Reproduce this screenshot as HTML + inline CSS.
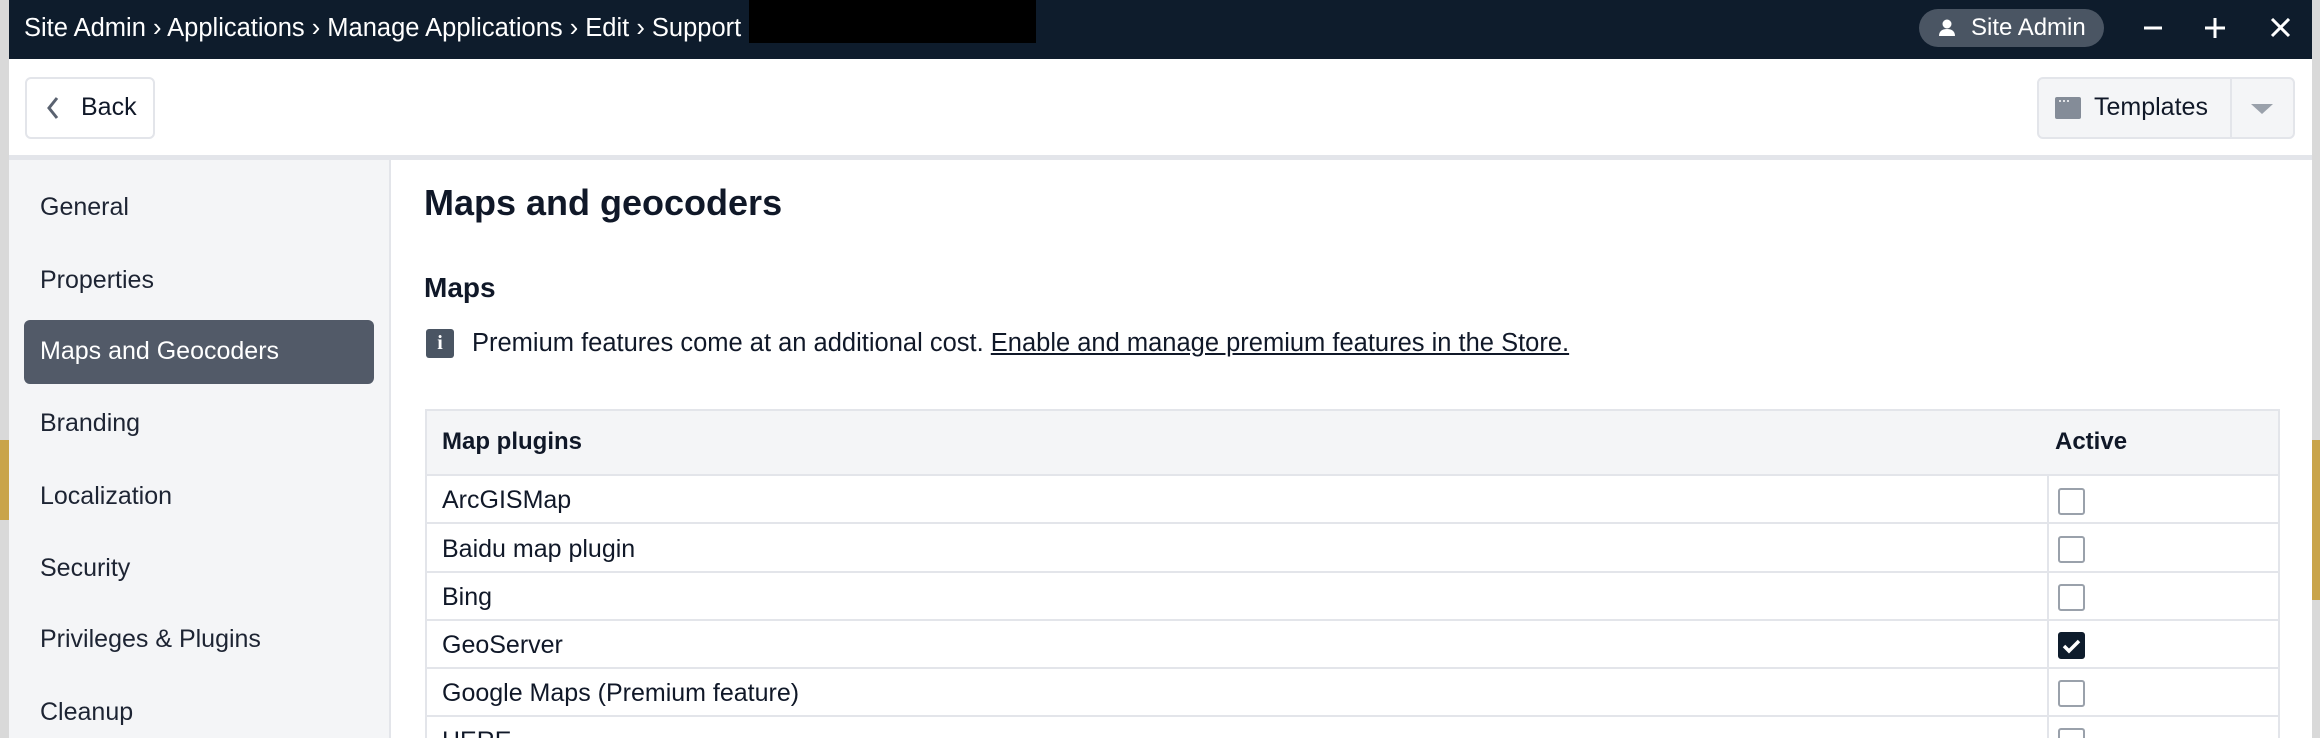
<!DOCTYPE html>
<html style="width:2320px;height:738px;overflow:hidden"><head><meta charset="utf-8"><style>
*{box-sizing:border-box;margin:0;padding:0}
body{width:2320px;height:738px;overflow:hidden;background:#d9d9d9;font-family:"Liberation Sans",sans-serif;color:#101828;position:relative}
.a{position:absolute}
.hdr{left:9px;top:0;width:2303px;height:59px;background:#0e1c2c}
.modal{left:9px;top:59px;width:2303px;height:679px;background:#fff}
.cb{position:absolute;left:2058px;width:27px;height:27px;border:2px solid #9aa1ab;border-radius:3px;background:#fff}
.row{position:absolute;left:425px;width:1855px;height:48px;border-bottom:2px solid #e3e5ea;font-size:25px;line-height:48px;padding-left:17px}
.side{position:absolute;left:40px;font-size:25px;color:#1d2433}
</style></head><body>
<div class="a" style="left:0;top:440px;width:9px;height:80px;background:#c9a44a"></div>
<div class="a" style="left:2312px;top:440px;width:8px;height:160px;background:#c9a44a"></div>
<div class="a hdr"></div>
<div class="a" style="left:24px;top:12px;font-size:25.5px;color:#fff;line-height:32px;white-space:nowrap">Site Admin › Applications › Manage Applications › Edit › Support</div>
<div class="a" style="left:749px;top:0;width:287px;height:43px;background:#000"></div>
<div class="a" style="left:1919px;top:9px;width:185px;height:38px;border-radius:19px;background:#4a5563"></div>
<svg class="a" style="left:1937px;top:18px" width="20" height="20" viewBox="0 0 20 20"><circle cx="10" cy="6" r="4.5" fill="#fff"/><path d="M2 18c0-5 3.5-7 8-7s8 2 8 7z" fill="#fff"/></svg>
<div class="a" style="left:1971px;top:12px;font-size:24px;color:#fff;line-height:32px">Site Admin</div>
<svg class="a" style="left:2142px;top:18px" width="160" height="22" viewBox="0 0 160 22"><path d="M2 10h18" stroke="#fff" stroke-width="3"/><path d="M63 10h20M73 0v20" stroke="#fff" stroke-width="3"/><path d="M130 1l17 17M147 1l-17 17" stroke="#fff" stroke-width="3"/></svg>
<div class="a modal"></div>
<div class="a" style="left:25px;top:77px;width:130px;height:62px;border:2px solid #e3e5ea;border-radius:6px;background:#fff"></div>
<svg class="a" style="left:46px;top:96px" width="14" height="24" viewBox="0 0 14 24"><path d="M11 2L3 12l8 10" stroke="#5a6270" stroke-width="3" fill="none"/></svg>
<div class="a" style="left:81px;top:91px;font-size:25px;line-height:32px">Back</div>
<div class="a" style="left:2037px;top:77px;width:258px;height:62px;border:2px solid #e3e5ea;border-radius:6px;background:#f4f5f7"></div>
<div class="a" style="left:2230px;top:79px;width:2px;height:58px;background:#e3e5ea"></div>
<svg class="a" style="left:2055px;top:97px" width="26" height="22" viewBox="0 0 26 22"><rect width="26" height="22" rx="2" fill="#848c98"/><circle cx="5" cy="4" r="1" fill="#fff"/><circle cx="9" cy="4" r="1" fill="#fff"/><circle cx="13" cy="4" r="1" fill="#fff"/></svg>
<div class="a" style="left:2094px;top:91px;font-size:25px;line-height:32px">Templates</div>
<svg class="a" style="left:2251px;top:104px" width="22" height="10" viewBox="0 0 22 10"><path d="M0 0h22L11 10z" fill="#9aa1ab"/></svg>
<div class="a" style="left:9px;top:155px;width:2303px;height:5px;background:#e3e5ea"></div>
<div class="a" style="left:9px;top:160px;width:382px;height:578px;background:#f4f5f7;border-right:2px solid #e3e5ea"></div>
<div class="a" style="left:24px;top:320px;width:350px;height:64px;border-radius:6px;background:#525a68"></div>
<div class="side" style="top:193px">General</div>
<div class="side" style="top:266px">Properties</div>
<div class="side" style="top:337px;color:#fff">Maps and Geocoders</div>
<div class="side" style="top:409px">Branding</div>
<div class="side" style="top:482px">Localization</div>
<div class="side" style="top:554px">Security</div>
<div class="side" style="top:625px">Privileges &amp; Plugins</div>
<div class="side" style="top:698px">Cleanup</div>
<div class="a" style="left:424px;top:180px;font-size:36px;font-weight:bold;line-height:46px">Maps and geocoders</div>
<div class="a" style="left:424px;top:271px;font-size:28px;font-weight:bold;line-height:34px">Maps</div>
<div class="a" style="left:426px;top:329px;width:28px;height:29px;border-radius:3px;background:#4a5563;color:#fff;font-weight:bold;font-size:20px;text-align:center;line-height:29px;font-family:'Liberation Serif',serif">i</div>
<div class="a" style="left:472px;top:328px;font-size:25.5px;line-height:30px;white-space:nowrap">Premium features come at an additional cost. <u>Enable and manage premium features in the Store.</u></div>
<div class="a" style="left:425px;top:409px;width:1855px;height:67px;background:#f4f5f7;border:2px solid #e3e5ea"></div>
<div class="a" style="left:442px;top:427px;font-size:24px;font-weight:bold;line-height:30px">Map plugins</div>
<div class="a" style="left:2055px;top:427px;font-size:24px;font-weight:bold;line-height:30px">Active</div>
<div class="a" style="left:425px;top:476px;width:2px;height:262px;background:#e3e5ea"></div>
<div class="a" style="left:2278px;top:476px;width:2px;height:262px;background:#e3e5ea"></div>
<div class="a" style="left:2047px;top:476px;width:2px;height:262px;background:#e3e5ea"></div>
<div class="row" style="top:476px">ArcGISMap</div>
<div class="row" style="top:525px">Baidu map plugin</div>
<div class="row" style="top:573px">Bing</div>
<div class="row" style="top:621px">GeoServer</div>
<div class="row" style="top:669px">Google Maps (Premium feature)</div>
<div class="row" style="top:717px;height:21px;overflow:hidden;border-bottom:none">HERE</div>
<div class="cb" style="top:488px"></div>
<div class="cb" style="top:536px"></div>
<div class="cb" style="top:584px"></div>
<div class="cb" style="top:632px;background:#0e1c2c;border-color:#0e1c2c"><svg width="23" height="23" viewBox="0 0 23 23" style="display:block"><path d="M4 12l5 5 10-10" stroke="#fff" stroke-width="3.5" fill="none"/></svg></div>
<div class="cb" style="top:680px"></div>
<div class="cb" style="top:728px;height:10px;border-bottom:none;border-radius:3px 3px 0 0"></div>
</body></html>
